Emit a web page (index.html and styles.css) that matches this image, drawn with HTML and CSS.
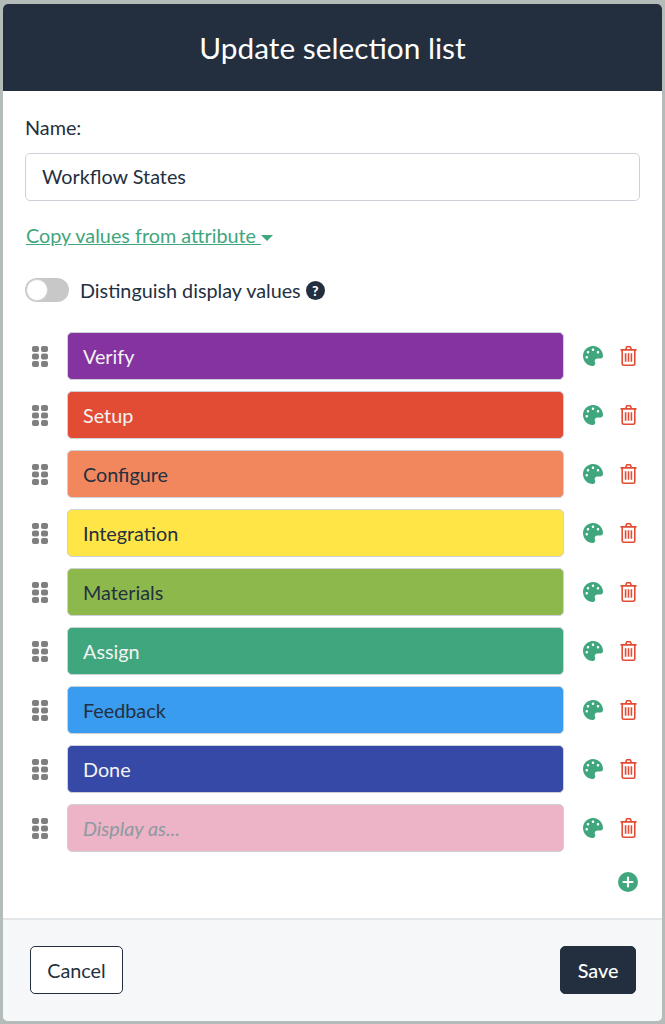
FILE: index.html
```html
<!DOCTYPE html>
<html lang="en">
<head>
    <meta charset="UTF-8">
    <title>Update selection list</title>
    <link rel="stylesheet" href="styles.css">
</head>
<body>
    <svg class="defs" width="0" height="0" aria-hidden="true">
        <symbol id="palette" viewBox="0 0 512 512">
            <path d="M204.3 5C104.9 24.4 24.8 104.3 5.2 203.4c-37 187 131.7 326.4 258.8 306.7 41.2-6.4 61.4-54.6 42.5-91.7-23.1-45.4 9.9-98.4 60.9-98.4h79.7c35.8 0 64.8-29.6 64.9-65.3C511.5 97.1 368.1-26.9 204.3 5zM96 320c-17.7 0-32-14.3-32-32s14.3-32 32-32 32 14.3 32 32-14.3 32-32 32zm32-128c-17.7 0-32-14.3-32-32s14.3-32 32-32 32 14.3 32 32-14.3 32-32 32zm128-64c-17.7 0-32-14.3-32-32s14.3-32 32-32 32 14.3 32 32-14.3 32-32 32zm128 64c-17.7 0-32-14.3-32-32s14.3-32 32-32 32 14.3 32 32-14.3 32-32 32z"/>
        </symbol>
        <symbol id="trash" viewBox="0 0 17 20">
            <path d="M0.5 3.9h16M5.6 3.7l1-2.6c.1-.3.3-.4.6-.4h2.6c.3 0 .5.1.6.4l1 2.6M2.2 3.9v13.6c0 1 .7 1.7 1.7 1.7h9.2c1 0 1.7-.7 1.7-1.7V3.9M5.6 7.2v8.6M8.5 7.2v8.6M11.4 7.2v8.6" fill="none" stroke="currentColor" stroke-width="1.6"/>
        </symbol>
        <symbol id="grip" viewBox="0 0 16 21">
            <rect x="0" y="0" width="7" height="6" rx="2"/>
            <rect x="9" y="0" width="7" height="6" rx="2"/>
            <rect x="0" y="7.5" width="7" height="6" rx="2"/>
            <rect x="9" y="7.5" width="7" height="6" rx="2"/>
            <rect x="0" y="15" width="7" height="6" rx="2"/>
            <rect x="9" y="15" width="7" height="6" rx="2"/>
        </symbol>
    </svg>

    <div class="modal">
        <div class="modal-header">
            <h1>Update selection list</h1>
        </div>

        <div class="modal-body">
            <label class="field-label" for="listName">Name:</label>
            <input class="name-input" id="listName" type="text" value="Workflow States">

            <div class="copy-row">
                <a class="copy-link" href="#">Copy values from attribute <span class="caret"></span></a>
            </div>

            <div class="toggle-row">
                <span class="toggle"><span class="toggle-knob"></span></span>
                <span class="toggle-label">Distinguish display values</span>
                <span class="help">?</span>
            </div>

            <div class="value-list">
                <div class="value-row">
                    <svg class="grip"><use href="#grip"/></svg>
                    <input class="value-input purple" type="text" value="Verify">
                    <svg class="palette"><use href="#palette"/></svg>
                    <svg class="trash"><use href="#trash"/></svg>
                </div>
                <div class="value-row">
                    <svg class="grip"><use href="#grip"/></svg>
                    <input class="value-input red" type="text" value="Setup">
                    <svg class="palette"><use href="#palette"/></svg>
                    <svg class="trash"><use href="#trash"/></svg>
                </div>
                <div class="value-row">
                    <svg class="grip"><use href="#grip"/></svg>
                    <input class="value-input orange" type="text" value="Configure">
                    <svg class="palette"><use href="#palette"/></svg>
                    <svg class="trash"><use href="#trash"/></svg>
                </div>
                <div class="value-row">
                    <svg class="grip"><use href="#grip"/></svg>
                    <input class="value-input yellow" type="text" value="Integration">
                    <svg class="palette"><use href="#palette"/></svg>
                    <svg class="trash"><use href="#trash"/></svg>
                </div>
                <div class="value-row">
                    <svg class="grip"><use href="#grip"/></svg>
                    <input class="value-input green" type="text" value="Materials">
                    <svg class="palette"><use href="#palette"/></svg>
                    <svg class="trash"><use href="#trash"/></svg>
                </div>
                <div class="value-row">
                    <svg class="grip"><use href="#grip"/></svg>
                    <input class="value-input teal" type="text" value="Assign">
                    <svg class="palette"><use href="#palette"/></svg>
                    <svg class="trash"><use href="#trash"/></svg>
                </div>
                <div class="value-row">
                    <svg class="grip"><use href="#grip"/></svg>
                    <input class="value-input blue" type="text" value="Feedback">
                    <svg class="palette"><use href="#palette"/></svg>
                    <svg class="trash"><use href="#trash"/></svg>
                </div>
                <div class="value-row">
                    <svg class="grip"><use href="#grip"/></svg>
                    <input class="value-input indigo" type="text" value="Done">
                    <svg class="palette"><use href="#palette"/></svg>
                    <svg class="trash"><use href="#trash"/></svg>
                </div>
                <div class="value-row">
                    <svg class="grip"><use href="#grip"/></svg>
                    <input class="value-input pink" type="text" placeholder="Display as...">
                    <svg class="palette"><use href="#palette"/></svg>
                    <svg class="trash"><use href="#trash"/></svg>
                </div>
            </div>

            <div class="add-row">
                <svg class="add" viewBox="0 0 20 20">
                    <circle cx="10" cy="10" r="10"/>
                    <path d="M10 5.5v9M5.5 10h9" stroke="#fff" stroke-width="2.2" stroke-linecap="round"/>
                </svg>
            </div>
        </div>

        <div class="modal-footer">
            <button class="button cancel">Cancel</button>
            <button class="button save">Save</button>
        </div>
    </div>
</body>
</html>
```

FILE: styles.css
```css
* {
    margin: 0;
    padding: 0;
    box-sizing: border-box;
}

body {
    font-family: Lato, 'Open Sans', sans-serif;
    background: #b4bcba;
    color: #243040;
    height: 1024px;
    padding: 4px 3px 3px;
    overflow: hidden;
}

.defs {
    position: absolute;
}

.modal {
    background: white;
    border-radius: 5px;
    height: 1017px;
    display: flex;
    flex-direction: column;
    overflow: hidden;
}

.modal-header {
    background: #232f3e;
    color: white;
    height: 87px;
    display: flex;
    align-items: center;
    justify-content: center;
}

.modal-header h1 {
    font-size: 29.8px;
    font-weight: 400;
}

.modal-body {
    flex: 1;
    padding: 23px 22px 0;
}

.field-label {
    display: block;
    font-size: 19.8px;
    line-height: 26px;
    margin-bottom: 13px;
}

.name-input {
    display: block;
    width: 615px;
    height: 48px;
    padding: 0 16px 2px;
    border: 1px solid #ccd2d8;
    border-radius: 5px;
    font-family: inherit;
    font-size: 19.8px;
    color: #243040;
}

.copy-row {
    margin-top: 21px;
    margin-left: 1px;
    line-height: 26px;
}

.copy-link {
    color: #40a67d;
    font-size: 19.8px;
    text-decoration: underline;
}

.caret {
    display: inline-block;
    border-left: 6px solid transparent;
    border-right: 6px solid transparent;
    border-top: 6px solid #40a67d;
    vertical-align: 2px;
}

.toggle-row {
    display: flex;
    align-items: center;
    margin-top: 28px;
    height: 24px;
}

.toggle {
    width: 44px;
    height: 24px;
    border-radius: 12px;
    background: #c8c8c8;
    display: flex;
    align-items: center;
    margin-right: 11px;
}

.toggle-knob {
    width: 22px;
    height: 22px;
    margin-left: 1px;
    border-radius: 50%;
    background: white;
    border: 1px solid #d4d4d4;
}

.toggle-label {
    font-size: 19.8px;
}

.help {
    width: 19px;
    height: 19px;
    margin-left: 5px;
    border-radius: 50%;
    background: #232f3e;
    color: white;
    font-size: 14px;
    font-weight: 900;
    display: flex;
    align-items: center;
    justify-content: center;
}

.value-list {
    margin-top: 30px;
    display: flex;
    flex-direction: column;
    gap: 11px;
}

.value-row {
    display: flex;
    align-items: center;
    height: 48px;
}

.grip {
    width: 16px;
    height: 21px;
    margin-left: 7px;
    margin-right: 19px;
    fill: #7f7f7f;
}

.value-input {
    width: 497px;
    height: 48px;
    padding: 0 15px;
    border: 1px solid #ccd2d8;
    border-radius: 5px;
    font-family: inherit;
    font-size: 19.8px;
    color: #243040;
}

.value-input.purple { background: #8533a0; color: #f3f3f3; }
.value-input.red { background: #e34c34; color: #f3f3f3; }
.value-input.orange { background: #f2875e; }
.value-input.yellow { background: #ffe545; }
.value-input.green { background: #8db94c; }
.value-input.teal { background: #40a67d; color: #f3f3f3; }
.value-input.blue { background: #399cee; }
.value-input.indigo { background: #3749a6; color: #f3f3f3; }
.value-input.pink { background: #edb3c6; }

.value-input::placeholder {
    color: #8c9aa0;
    font-style: italic;
    opacity: 1;
}

.palette {
    width: 20px;
    height: 20px;
    margin-left: 19px;
    fill: #40a67d;
}

.trash {
    width: 17px;
    height: 20px;
    margin-left: 17px;
    color: #e34c34;
}

.add-row {
    display: flex;
    justify-content: flex-end;
    margin-top: 20px;
    padding-right: 2px;
}

.add {
    width: 20px;
    height: 20px;
    fill: #40a67d;
}

.modal-footer {
    height: 103px;
    background: #f5f7f9;
    border-top: 2px solid #e3e6e9;
    padding: 26px 26px 0 27px;
    display: flex;
    justify-content: space-between;
    align-items: flex-start;
}

.button {
    height: 48px;
    border-radius: 5px;
    font-family: inherit;
    font-size: 19.8px;
    padding: 0;
}

.button.cancel {
    width: 93px;
    background: white;
    border: 1px solid #232f3e;
    color: #243040;
}

.button.save {
    width: 76px;
    background: #232f3e;
    border: 1px solid #232f3e;
    color: white;
    font-weight: 500;
}
```
